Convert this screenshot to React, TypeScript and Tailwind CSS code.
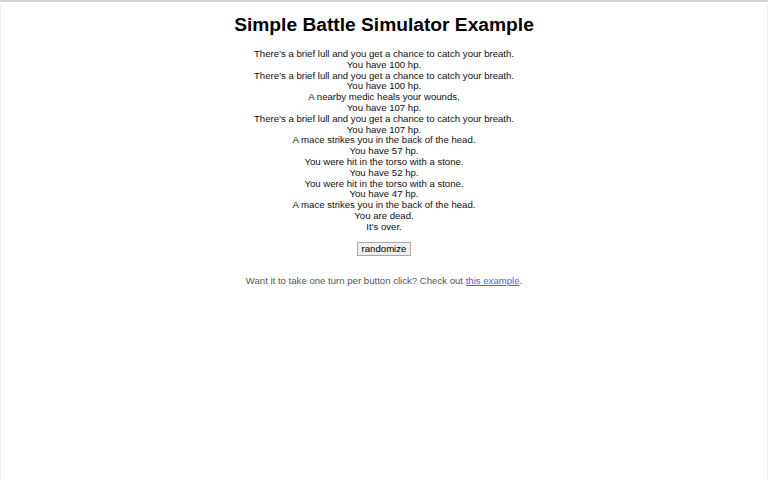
import React from "react";

// battle log lines, in order
const log = [
  "There’s a brief lull and you get a chance to catch your breath.",
  "You have 100 hp.",
  "There’s a brief lull and you get a chance to catch your breath.",
  "You have 100 hp.",
  "A nearby medic heals your wounds.",
  "You have 107 hp.",
  "There’s a brief lull and you get a chance to catch your breath.",
  "You have 107 hp.",
  "A mace strikes you in the back of the head.",
  "You have 57 hp.",
  "You were hit in the torso with a stone.",
  "You have 52 hp.",
  "You were hit in the torso with a stone.",
  "You have 47 hp.",
  "A mace strikes you in the back of the head.",
  "You are dead.",
  "It’s over.",
];

export default function App() {
  return (
    <div
      className="min-h-[480px] border-t-2 border-x border-t-[#d4d4d4] border-x-[#f2f2f2] bg-white text-center text-black"
      style={{ fontFamily: '"Liberation Sans", Arial, sans-serif' }}
    >
      <h1 className="mt-[12px] text-[19.2px] font-bold leading-[22px]">Simple Battle Simulator Example</h1>

      <div className="mt-[13px] text-[9.6px] leading-[10.8px] text-[#111]">
        {log.map((line, i) => (
          <div key={i}>{line}</div>
        ))}
      </div>

      <button className="mt-[9px] h-[14px] border border-[#a9a9a9] bg-[#efefef] px-[4px] text-[9.6px] leading-[12px] text-black">
        randomize
      </button>

      <p className="mt-[16px] text-[9.6px] leading-[11px] text-[#555]">
        Want it to take one turn per button click? Check out{" "}
        <a href="#" className="text-[#5b5bd6] underline">
          this example
        </a>
        .
      </p>
    </div>
  );
}
